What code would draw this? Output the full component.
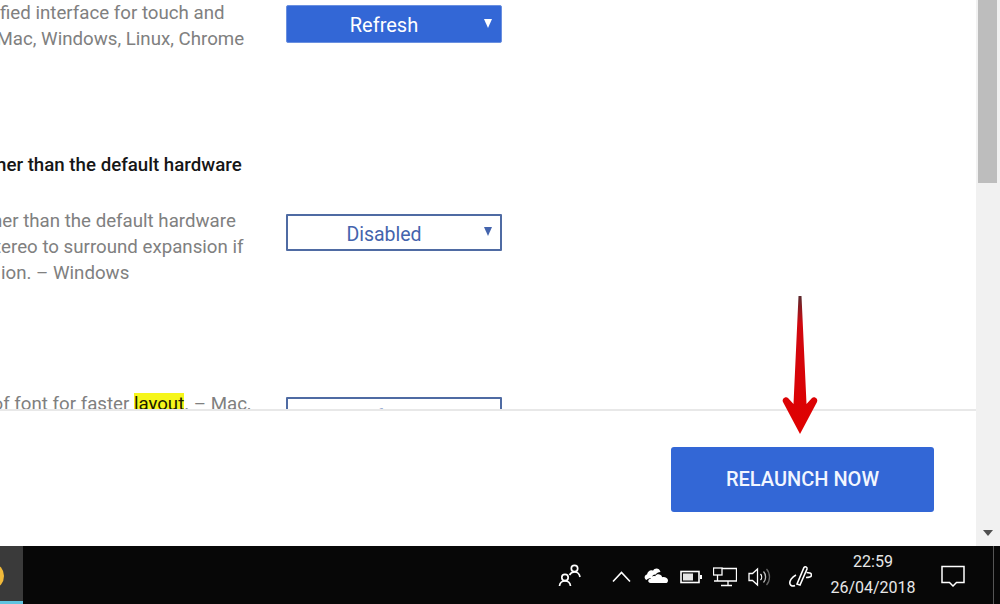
<script>
  // flag rows that are still visible above the relaunch bar
</script>

<div class="screen">
  <div class="window">
    <div class="main">
      <div class="flags">
        <div class="flag first">
          <div class="desc">
            <p class="cut-a">fied interface for touch and</p>
            <p class="cut-b">Mac, Windows, Linux, Chrome</p>
          </div>
          <button class="select filled">Refresh<span class="caret"></span></button>
        </div>

        <h3 class="cut-h">her than the default hardware</h3>
        <div class="flag">
          <div class="desc">
            <p class="cut-c">her than the default hardware</p>
            <p class="cut-d">tereo to surround expansion if</p>
            <p class="cut-e">ion. – Windows</p>
          </div>
          <button class="select">Disabled<span class="caret"></span></button>
        </div>

        <div class="flag last">
          <div class="desc">
            <p class="cut-f">of font for faster <mark>layout</mark>. – Mac,</p>
          </div>
          <button class="select">Default<span class="caret"></span></button>
        </div>
      </div>

      <div class="relaunch">
        <button class="relaunch-btn">RELAUNCH NOW</button>
      </div>
    </div>

    <div class="scrollbar">
      <div class="thumb"></div>
      <svg class="down" width="12" height="8" viewBox="0 0 12 8"><path d="M1 1h10L6 7z" fill="#505050" /></svg>
    </div>
  </div>

  <div class="taskbar">
    <div class="app-tile"><span class="app-dot"></span></div>

    <svg class="tray people" width="24" height="24" viewBox="0 0 24 24" fill="none" stroke="#fff" stroke-width="1.7">
      <circle cx="7" cy="14.5" r="3.2" />
      <path d="M1.5 23c.3-3 2.5-5 5.5-5s5.2 2 5.5 5" />
      <circle cx="16.5" cy="5.5" r="3.2" />
      <path d="M11.5 12c1-2 3-3 5-3 3 0 5 2 5.5 5" />
    </svg>
    <svg class="tray chevron" width="24" height="24" viewBox="0 0 24 24" fill="none" stroke="#fff" stroke-width="1.6">
      <path d="M4 18.5l8.500-9 8.500 9" />
    </svg>
    <svg class="tray cloud" width="24" height="24" viewBox="0 0 24 24" fill="#fff">
      <path d="M2.500 17C0 16 0 12 3 11.500c.5-3 3.500-5 6-3.800C10.500 4.500 15.500 4.500 16.500 9c-2.200 0-4 1-4.700 2.500-2.500-.2-4 1.500-4 3.500-2 0-3.800.5-5.300 2z" />
      <path d="M6.500 20c-3-.2-3-4 0-4.300.2-2.200 2.500-3.200 4.700-2.500 1.300-2.700 6-2.500 7 1 3-.5 5.800 1 5.800 3.200 0 1.600-1 2.600-2.500 2.600z" />
    </svg>
    <svg class="tray battery" width="24" height="24" viewBox="0 0 24 24">
      <rect x="2" y="8.500" width="18" height="11" fill="none" stroke="#fff" stroke-width="1.6" />
      <rect x="4" y="10.500" width="10" height="7" fill="#e4e4e4" />
      <rect x="21" y="12" width="2" height="4" fill="#fff" />
    </svg>
    <svg class="tray network" width="24" height="24" viewBox="0 0 24 24" fill="none" stroke="#fff" stroke-width="1.3">
      <path d="M9 5.500h14.500V18H1" />
      <path d="M4.500 12v6M15 18v4.500M8 22.500h11" />
      <rect x="0.500" y="5" width="8.500" height="7" />
    </svg>
    <svg class="tray speaker" width="24" height="24" viewBox="0 0 24 24" fill="none" stroke="#fff" stroke-width="1.3">
      <path d="M1 10.500v7h3.500l5 4.500V6l-5 4.500z" />
      <path d="M12.500 11c1.500 1.700 1.500 4.500 0 6" />
      <path d="M15.500 8.500c2.800 3 2.800 8 0 11" stroke="#bbb" />
      <path d="M18.500 6c4 4.500 4 11.500 0 16" stroke="#666" />
    </svg>
    <svg class="tray pen" width="24" height="24" viewBox="0 0 24 24" fill="none" stroke="#fff" stroke-width="1.6">
      <path d="M9 21L16 4.500c1-1.500 3.500-.5 3 1.500L12 22z" />
      <path d="M8 12C4 14 1 18 2 21c.5 2 3 2.500 5 1.500" />
      <path d="M18.500 9.500c3 0 5 1 5 2.500s-2 2.500-5.500 2.500" />
    </svg>

    <div class="clock">
      <span>22:59</span>
      <span>26/04/2018</span>
    </div>

    <svg class="tray notify" width="24" height="24" viewBox="0 0 24 24" fill="none" stroke="#fff" stroke-width="1.5">
      <path d="M1 3.500h22v16h-7.500L12 23l-3.500-3.500H1z" />
    </svg>
    <div class="show-desktop"></div>
  </div>

  <svg class="arrow" width="40" height="142" viewBox="0 0 40 142">
    <defs>
      <linearGradient id="shaft" x1="0" y1="0" x2="0" y2="1">
        <stop offset="0" stop-color="#5a2a2e" />
        <stop offset="0.2" stop-color="#d00810" />
        <stop offset="1" stop-color="#e00000" />
      </linearGradient>
    </defs>
    <path d="M18.500 1h3L26.500 109l5.500-6c2.500-2 6.500 1 5 4L20 139 3 107c-1.500-3 2.500-6 5-4l5.500 6z" fill="url(#shaft)" />
  </svg>
</div>

<style>
  :global(body) {
    margin: 0;
    background: #fff;
  }
  .screen {
    position: relative;
    width: 1000px;
    height: 604px;
    overflow: hidden;
    display: flex;
    flex-direction: column;
    font-family: Roboto, "Liberation Sans", sans-serif;
  }
  .window {
    height: 546px;
    display: flex;
  }
  .main {
    flex: 1;
    min-width: 0;
    display: flex;
    flex-direction: column;
  }
  .flags {
    height: 410px;
    overflow: hidden;
    flex: none;
  }
  .flag {
    display: grid;
    grid-template-columns: 286px 216px;
    align-items: start;
  }
  .flag.first {
    margin-top: -1px;
  }
  .flag.last {
    margin-top: 104px;
  }
  .desc {
    min-width: 0;
    overflow: hidden;
  }
  .flag.first .desc,
  .flag.last .desc {
    padding-top: 1px;
  }
  p,
  h3 {
    margin: 0;
    font-size: 18.7px;
    line-height: 26px;
    white-space: nowrap;
  }
  p {
    color: #808080;
    font-weight: 400;
  }
  h3 {
    margin-top: 100px;
    margin-bottom: 30px;
    color: #161616;
    font-weight: 500;
  }
  .cut-a {
    margin-left: 0;
  }
  .cut-b {
    margin-left: -3.5px;
  }
  .cut-h {
    margin-left: -4px;
  }
  .cut-c {
    margin-left: -8px;
  }
  .cut-d {
    margin-left: -5px;
  }
  .cut-e {
    margin-left: 1px;
  }
  .cut-f {
    margin-left: -7.5px;
  }
  mark {
    background: #f6f61a;
    color: #1c1c00;
  }
  .select {
    position: relative;
    height: 37px;
    margin-top: 6px;
    padding: 2px 20px 0 0;
    border: 2px solid #4f6ba3;
    border-radius: 1px;
    background: #fff;
    color: #4464ad;
    font: 400 19.5px/33px Roboto, "Liberation Sans", sans-serif;
    text-align: center;
  }
  .select.filled {
    height: 38px;
    border-color: #6a90e0;
    border-width: 1px;
    border-radius: 2px;
    background: #3367d6;
    color: #fff;
    font-size: 20px;
  }
  .flag.last .select {
    margin-top: 7px;
  }
  .caret {
    position: absolute;
    top: 11px;
    right: 8px;
    width: 0;
    height: 0;
    border-left: 4.5px solid transparent;
    border-right: 4.5px solid transparent;
    border-top: 9px solid currentColor;
  }
  .filled .caret {
    top: 13px;
    right: 9px;
  }
  .relaunch {
    flex: 1;
    position: relative;
    border-top: 2px solid #e8e8e8;
    margin-top: -1px;
    background: #fff;
    display: flex;
    justify-content: flex-end;
    align-items: flex-start;
    padding: 36px 42px 0 0;
  }
  .relaunch-btn {
    width: 263px;
    height: 65px;
    border: none;
    border-radius: 3px;
    background: #3367d6;
    color: #f2f6ff;
    font: 500 20px/65px Roboto, "Liberation Sans", sans-serif;
    padding: 0;
  }
  .scrollbar {
    position: relative;
    width: 24px;
    flex: none;
    background: #f1f1f1;
    display: flex;
    flex-direction: column;
    align-items: flex-start;
    padding-left: 2px;
    box-sizing: border-box;
  }
  .thumb {
    width: 19px;
    height: 183px;
    background: #bdbdbd;
  }
  .down {
    margin-top: auto;
    margin-bottom: 9px;
    margin-left: 4px;
  }
  .taskbar {
    height: 58px;
    flex: none;
    display: flex;
    align-items: center;
    background: #070707;
    color: #fff;
  }
  .app-tile {
    position: relative;
    align-self: stretch;
    width: 23px;
    overflow: hidden;
    background: #3a3a3a;
    border-bottom: 3px solid #5fc4e0;
    box-sizing: border-box;
    margin-right: 535px;
  }
  .app-dot {
    position: absolute;
    left: -16px;
    top: 18px;
    width: 20px;
    height: 24px;
    border-radius: 50%;
    background: #f0b93a;
  }
  .tray {
    flex: none;
  }
  .chevron {
    margin-left: 27px;
  }
  .cloud,
  .battery,
  .speaker {
    margin-left: 11px;
  }
  .network {
    margin-left: 10px;
  }
  .pen {
    margin-left: 16px;
  }
  .clock {
    width: 86px;
    margin-left: 18px;
    display: flex;
    flex-direction: column;
    align-items: center;
    gap: 4px;
    font-size: 16px;
    line-height: 22px;
    color: #e8e8e8;
  }
  .notify {
    margin-left: 25px;
  }
  .show-desktop {
    width: 1px;
    align-self: stretch;
    margin-left: 28px;
    background: #555;
  }
  .arrow {
    position: absolute;
    left: 780px;
    top: 295px;
  }
</style>
